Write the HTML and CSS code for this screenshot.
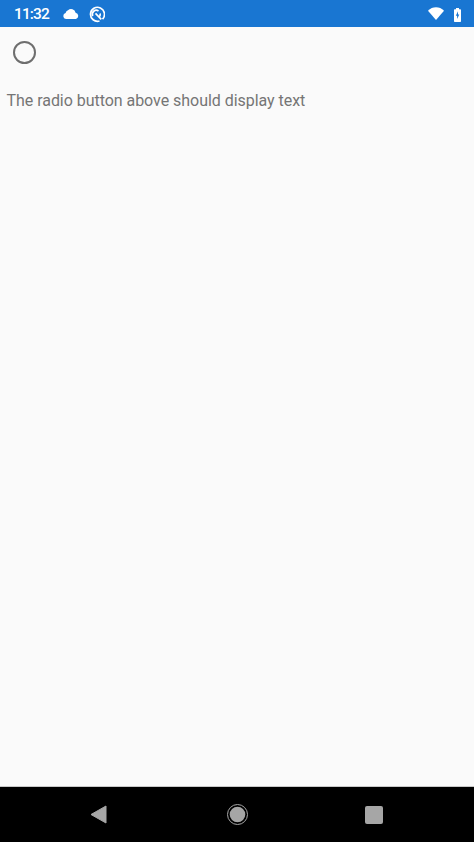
FILE: index.html
```html
<!DOCTYPE html>
<html lang="en">
<head>
    <meta charset="UTF-8">
    <meta name="viewport" content="width=device-width, initial-scale=1.0">
    <title>Radio button</title>
    <link rel="stylesheet" href="styles.css">
</head>
<body>
    <header class="status-bar">
        <span class="clock">11:32</span>
        <svg class="icon-cloud" width="16" height="10" viewBox="0 0 16 10">
            <path d="M3 10a3 3 0 0 1-.4-5.900A4 4 0 0 1 5 1.300 4.600 4.600 0 0 1 12.600 3.800 3.200 3.200 0 0 1 13 10z" fill="#fff"/>
        </svg>
        <svg class="icon-sync" width="17" height="17" viewBox="0 0 17 17">
            <path d="M14.500 13.200A7 7 0 1 0 11.500 15" fill="none" stroke="#fff" stroke-width="1.700"/>
            <path d="M4.800 10A3.900 3.900 0 0 1 10.500 5M12.200 7.500A3.900 3.900 0 0 1 11 11M7.500 7.300l5.800 6" fill="none" stroke="#fff" stroke-width="1.700"/>
        </svg>
        <span class="status-spacer"></span>
        <svg class="icon-wifi" width="16" height="13" viewBox="0 0 16 13">
            <path d="M0 3.700C4.400 -0.900 11.600 -0.900 16 3.700L8 13z" fill="#fff"/>
        </svg>
        <svg class="icon-battery" width="7" height="14" viewBox="0 0 7 14">
            <path d="M2 0h3v1.200h1.300a.7.7 0 0 1 .7.7v11.400a.7.7 0 0 1-.7.7H.7a.7.7 0 0 1-.7-.7V1.900a.7.7 0 0 1 .7-.7H2z" fill="#fff"/>
            <path d="M4 3.200L1.800 7.800h1.300v3.200L5.300 6.500H4z" fill="#1976d2"/>
        </svg>
    </header>

    <main class="content">
        <label class="radio-row">
            <span class="radio"></span>
        </label>
        <p class="note">The radio button above should display text</p>
    </main>

    <nav class="nav-bar">
        <svg class="nav-back" width="17" height="19" viewBox="0 0 17 19">
            <path d="M16 1v17L1 9.500z" fill="#a6a6a6" stroke="#a6a6a6" stroke-width="1" stroke-linejoin="round"/>
        </svg>
        <svg class="nav-home" width="21" height="21" viewBox="0 0 21 21">
            <circle cx="10.500" cy="10.500" r="10" fill="none" stroke="#a6a6a6" stroke-width="1"/>
            <circle cx="10.500" cy="10.500" r="7.800" fill="#a6a6a6"/>
        </svg>
        <span class="nav-recent"></span>
    </nav>
</body>
</html>
```

FILE: styles.css
```css
html, body {
    height: 100%;
}

body {
    margin: 0;
    display: flex;
    flex-direction: column;
    background-color: #fafafa;
    font-family: 'Roboto', sans-serif;
}

.status-bar {
    height: 27px;
    flex-shrink: 0;
    display: flex;
    align-items: center;
    padding: 0 13px 0 14px;
    background-color: #1976d2;
    color: white;
}

.clock {
    font-size: 15.500px;
    font-weight: 500;
    letter-spacing: -0.900px;
    margin-right: 14px;
}

.icon-cloud {
    margin-right: 9px;
}

.icon-sync {
    margin-top: 1px;
}

.status-spacer {
    flex: 1;
}

.icon-wifi {
    margin-right: 10px;
}

.icon-battery {
    margin-top: 3px;
}

.content {
    flex: 1;
    border-bottom: 1px solid #c8c8c8;
}

.radio-row {
    display: block;
    padding: 14px 13px 0;
}

.radio {
    display: block;
    width: 19px;
    height: 19px;
    border: 2.500px solid #6e6e6e;
    border-radius: 50%;
}

.note {
    margin: 25px 0 0 6.500px;
    font-size: 16px;
    letter-spacing: -0.040px;
    line-height: 24px;
    color: #757575;
}

.nav-bar {
    height: 55px;
    flex-shrink: 0;
    display: flex;
    align-items: center;
    padding-left: 90px;
    background-color: black;
}

.nav-home {
    margin-left: 119.500px;
}

.nav-recent {
    width: 18px;
    height: 18px;
    margin-left: 117.500px;
    border-radius: 2px;
    background-color: #a6a6a6;
}
```
